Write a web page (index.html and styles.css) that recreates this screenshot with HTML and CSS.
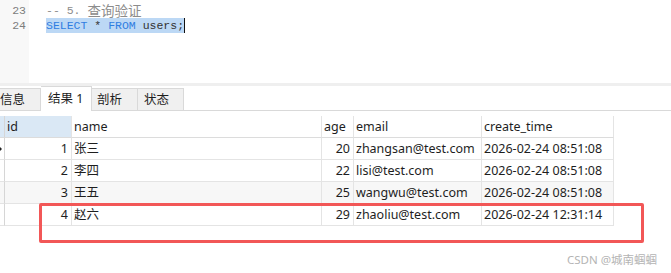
FILE: index.html
```html
<!DOCTYPE html>
<html>
<head>
<meta charset="utf-8">
<link rel="stylesheet" href="styles.css">
</head>
<body>
<div class="page">
  <div class="editor">
    <div class="gutter">
      <div class="ln">23</div>
      <div class="ln">24</div>
    </div>
    <div class="code">
      <div class="line comment">-- 5. <span class="cjk">查询验证</span></div>
      <div class="line"><span class="sel"><span class="kw">SELECT</span> * <span class="kw">FROM</span> users;</span><span class="caret"></span></div>
    </div>
  </div>
  <div class="band"></div>
  <div class="tabs">
    <div class="tab first">信息</div>
    <div class="tab active">结果 1</div>
    <div class="tab t3">剖析</div>
    <div class="tab t4">状态</div>
  </div>
  <div class="grid">
    <div class="c ind hd"></div>
    <div class="c hd idh">id</div>
    <div class="c hd">name</div>
    <div class="c hd">age</div>
    <div class="c hd">email</div>
    <div class="c hd">create_time</div>

    <div class="c ind"><svg class="arrow" width="4" height="6" viewBox="0 0 4 6"><path d="M0 0 L3 3 L0 6 Z" fill="#222"/></svg></div>
    <div class="c num">1</div>
    <div class="c">张三</div>
    <div class="c num">20</div>
    <div class="c">zhangsan@test.com</div>
    <div class="c">2026-02-24 08:51:08</div>

    <div class="c ind"></div>
    <div class="c num">2</div>
    <div class="c">李四</div>
    <div class="c num">22</div>
    <div class="c">lisi@test.com</div>
    <div class="c">2026-02-24 08:51:08</div>

    <div class="c ind alt"></div>
    <div class="c num alt">3</div>
    <div class="c alt">王五</div>
    <div class="c num alt">25</div>
    <div class="c alt">wangwu@test.com</div>
    <div class="c alt">2026-02-24 08:51:08</div>

    <div class="c ind"></div>
    <div class="c num">4</div>
    <div class="c">赵六</div>
    <div class="c num">29</div>
    <div class="c">zhaoliu@test.com</div>
    <div class="c">2026-02-24 12:31:14</div>
  </div>
  <div class="highlight"></div>
  <div class="watermark">CSDN @城南蝈蝈</div>
</div>
</body>
</html>
```

FILE: styles.css
```css
* { box-sizing: border-box; }
html, body { margin: 0; padding: 0; background: #fff; }
.page {
  position: relative;
  width: 671px;
  height: 273px;
  overflow: hidden;
  font-family: "Noto Sans", "Noto Sans CJK SC", sans-serif;
  font-size: 12.5px;
  color: #1e1e1e;
}
.editor {
  display: flex;
  height: 83px;
}
.gutter {
  width: 29px;
  background: #f8f8f8;
  padding-top: 3px;
}
.ln {
  height: 15px;
  line-height: 15px;
  text-align: right;
  padding-right: 3px;
  font-family: "Liberation Mono", "Noto Sans CJK SC", monospace;
  font-size: 11.5px;
  color: #7d7d7d;
}
.code {
  padding-left: 17px;
  padding-top: 3px;
  font-family: "Liberation Mono", "Noto Sans CJK SC", monospace;
  font-size: 11.5px;
}
.line {
  height: 15px;
  line-height: 15px;
  display: flex;
  align-items: stretch;
  white-space: pre;
  color: #333;
}
.comment { color: #8c8c8c; }
.cjk { font-family: "Noto Sans CJK SC", sans-serif; font-size: 13.5px; line-height: 15px; }
.sel { background: #bcd8f5; }
.kw { color: #2f7de1; }
.caret {
  width: 1px;
  background: #111;
}
.band {
  height: 3px;
  background: #efefef;
}
.tabs {
  display: flex;
  align-items: flex-end;
  height: 25px;
  border-bottom: 1px solid #d9d9d9;
}
.tab {
  height: 22px;
  line-height: 21px;
  background: #f0f0f0;
  border: 1px solid #d9d9d9;
  border-bottom: none;
  border-left: none;
  padding-left: 6px;
  font-size: 12.5px;
  color: #1e1e1e;
  white-space: nowrap;
}
.tab.first { width: 41px; padding-left: 0; }
.tab.active {
  width: 51px;
  height: 25px;
  line-height: 24px;
  background: #fff;
  margin-bottom: -1px;
  padding-left: 7px;
}
.tab.t3 { width: 46px; padding-left: 5px; }
.tab.t4 { width: 46px; padding-left: 6px; }
.grid {
  display: grid;
  grid-template-columns: 5px 67px 250px 32px 128px 132px;
  grid-auto-rows: 22px;
  margin-top: 5px;
  width: 614px;
}
.c {
  border-right: 1px solid #e4e4e4;
  border-bottom: 1px solid #e4e4e4;
  padding-left: 2px;
  line-height: 21px;
  white-space: nowrap;
  overflow: hidden;
}
.c.num { text-align: right; padding-right: 3px; padding-left: 0; }
.c.alt { background: #f7f7f7; }
.c.hd { border-bottom-color: #dcdcdc; }
.c.ind { padding: 0; display: flex; align-items: center; border-right-color: #d6d6d6; }
.c.ind.hd, .c.idh { background: #dae8f5; }
.c.idh { padding-left: 2px; }
.arrow { display: block; margin-left: -1px; }
.highlight {
  position: absolute;
  left: 39px;
  top: 203px;
  width: 605px;
  height: 40px;
  border: 3px solid #f25757;
  border-radius: 2px;
}
.watermark {
  position: absolute;
  left: 567px;
  top: 251px;
  font-size: 11.5px;
  color: #b4b4b4;
  font-family: "Noto Sans", "Noto Sans CJK SC", sans-serif;
  white-space: nowrap;
}
```
